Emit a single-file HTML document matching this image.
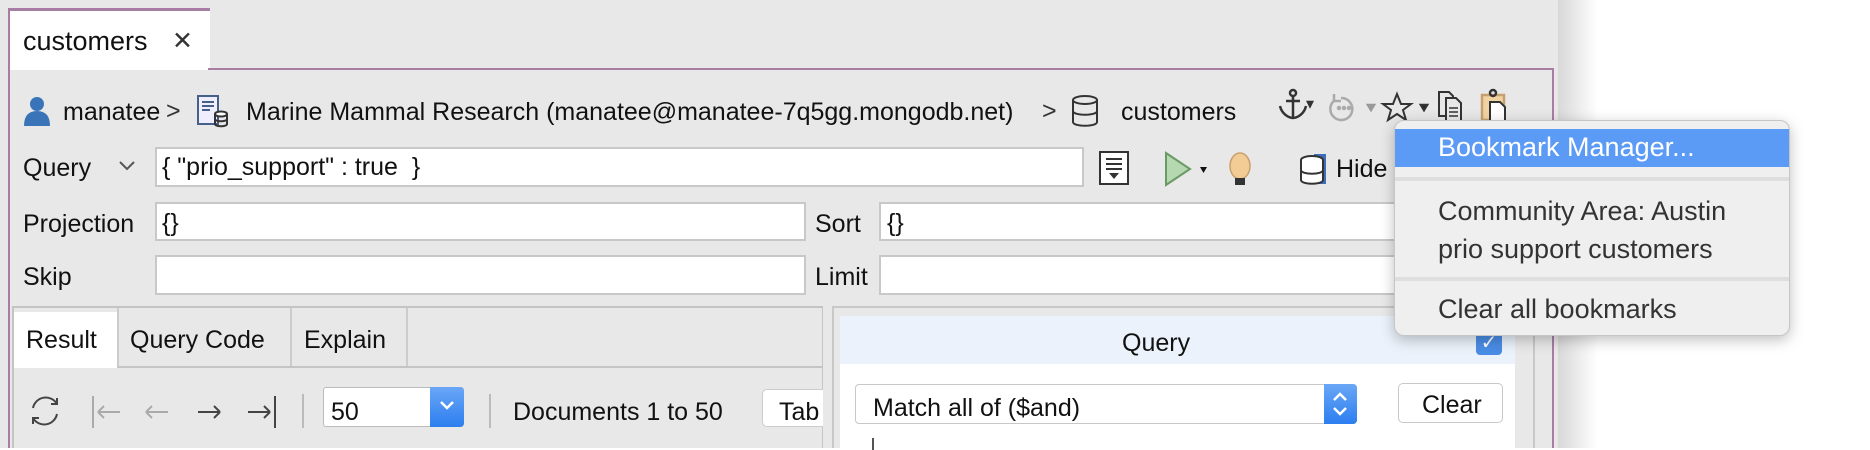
<!DOCTYPE html>
<html><head><meta charset="utf-8"><style>
*{box-sizing:border-box;margin:0;padding:0}
body{width:1870px;height:448px;overflow:hidden;background:#fff;font-family:"Liberation Sans",Arial,sans-serif;color:#111;position:relative}
.a{position:absolute}
.t{position:absolute;font-size:25px;white-space:nowrap;line-height:1}
.inp{position:absolute;background:#fff;border:2px solid #c8c8c8}
</style></head><body>
<div class="a" style="left:0;top:0;width:1558px;height:448px;background:#e8e8e8"></div>
<div class="a" style="left:1558px;top:0;width:40px;height:448px;background:linear-gradient(90deg,#d8d8d8,#fff)"></div>
<!-- tab -->
<div class="a" style="left:8px;top:8px;width:202px;height:62px;background:#fff;border-top:3px solid #a87da3;border-left:2px solid #a87da3"></div>
<div class="t" style="left:23px;top:28px;font-size:27px">customers</div>
<div class="t" style="left:172px;top:29px;font-size:25px;color:#333">✕</div>
<div class="a" style="left:208px;top:68px;width:1346px;height:2px;background:#a87da3"></div>
<div class="a" style="left:8px;top:68px;width:2px;height:380px;background:#a87da3"></div>
<div class="a" style="left:1552px;top:68px;width:2px;height:380px;background:#a87da3"></div>
<!-- breadcrumb -->
<svg class="a" style="left:22px;top:95px" width="32" height="32"><circle cx="15" cy="9" r="7" fill="#3a74b8"/><path d="M2 31 Q2 16 15 16 Q28 16 28 31Z" fill="#3a74b8"/></svg>
<div class="t" style="left:63px;top:100px">manatee</div>
<div class="t" style="left:166px;top:99px;color:#333">&gt;</div>
<svg class="a" style="left:196px;top:94px" width="34" height="34" fill="none" stroke="#46608a" stroke-width="2"><rect x="2" y="2" width="20" height="28" fill="#eef"/><path d="M6 8h12M6 12h12M6 16h8"/><ellipse cx="25" cy="20" rx="6" ry="2.5" fill="#fff" stroke="#333"/><path d="M19 20v10c0 3 12 3 12 0V20M19 25c0 3 12 3 12 0" stroke="#333"/></svg>
<div class="t" style="left:246px;top:100px">Marine Mammal Research (manatee@manatee-7q5gg.mongodb.net)</div>
<div class="t" style="left:1042px;top:99px;color:#333">&gt;</div>
<svg class="a" style="left:1070px;top:94px" width="30" height="34" fill="none" stroke="#333" stroke-width="2"><ellipse cx="15" cy="6" rx="12" ry="4"/><path d="M3 6v22c0 5 24 5 24 0V6M3 17c0 5 24 5 24 0"/></svg>
<div class="t" style="left:1121px;top:100px">customers</div>
<svg class="a" style="left:1276px;top:88px" width="280" height="36" fill="none" stroke="#333" stroke-width="2.5">
<circle cx="17" cy="5" r="3"/><path d="M17 8v22M10 13h14M4 18c2 9 10 12 13 12s11-3 13-12"/><path d="M32 14l4 0-2 4z" fill="#111"/>
<path d="M59 12a11 11 0 1 0 6-2" stroke="#aaa"/><path d="M58 6v7h7" stroke="#aaa"/><circle cx="63" cy="20" r="1" fill="#aaa" stroke="#aaa"/><circle cx="68" cy="20" r="1" fill="#aaa" stroke="#aaa"/><circle cx="73" cy="20" r="1" fill="#aaa" stroke="#aaa"/><path d="M92 17l6 0-3 5z" fill="#999" stroke="#999"/>
<path d="M121 6l4 10 10 0-8 6 3 10-9-6-9 6 3-10-8-6 10 0z" stroke-width="2"/><path d="M145 17l6 0-3 5z" fill="#111"/>
<path d="M163 4h10l4 4v20h-14z" stroke-width="2"/><path d="M170 10h10l5 5v18h-15z" fill="#e8e8e8" stroke-width="2"/><path d="M173 20h9M173 24h9M173 28h9" stroke-width="1.5"/>
<rect x="206" y="7" width="22" height="25" fill="#f0d3a0" stroke="#c8a070"/><circle cx="217" cy="5" r="3"/><path d="M214 14h10l5 5v15h-15z" fill="#fff" stroke-width="2"/>
</svg>
<!-- query row -->
<div class="t" style="left:23px;top:156px">Query</div>
<svg class="a" style="left:118px;top:160px" width="18" height="12"><path d="M2 2l7 7 7-7" fill="none" stroke="#555" stroke-width="2"/></svg>
<div class="inp" style="left:155px;top:147px;width:929px;height:40px"></div>
<div class="t" style="left:162px;top:155px">{ "prio_support" : true&nbsp; }</div>
<svg class="a" style="left:1098px;top:150px" width="34" height="36"><rect x="2" y="2" width="28" height="32" fill="#fff" stroke="#333" stroke-width="2"/><path d="M8 9h16M8 14h16M8 19h16" stroke="#333" stroke-width="2"/><path d="M11 23h10l-5 6z" fill="#333"/></svg>
<svg class="a" style="left:1163px;top:150px" width="100" height="40"><path d="M3 3l24 16-24 16z" fill="#b5d8b0" stroke="#6a9a64" stroke-width="2"/><path d="M37 17h7l-3.5 6z" fill="#111"/><ellipse cx="77" cy="16" rx="10" ry="13" fill="#f2cc94" stroke="#c8a070" stroke-width="1.5"/><rect x="72" y="28" width="10" height="7" fill="#333"/></svg>
<svg class="a" style="left:1298px;top:152px" width="34" height="36" fill="#fff" stroke="#333" stroke-width="2"><rect x="16" y="2" width="12" height="30" fill="#3c6fb5" stroke="none"/><ellipse cx="14" cy="8" rx="11" ry="4"/><path d="M3 8v20c0 5 22 5 22 0V8M3 18c0 5 22 5 22 0"/></svg>
<div class="t" style="left:1336px;top:157px">Hide Q</div>
<!-- projection/sort -->
<div class="t" style="left:23px;top:212px">Projection</div>
<div class="inp" style="left:155px;top:202px;width:651px;height:39px"></div>
<div class="t" style="left:162px;top:211px">{}</div>
<div class="t" style="left:815px;top:212px">Sort</div>
<div class="inp" style="left:879px;top:202px;width:670px;height:39px"></div>
<div class="t" style="left:887px;top:211px">{}</div>
<div class="t" style="left:23px;top:265px">Skip</div>
<div class="inp" style="left:155px;top:255px;width:651px;height:40px"></div>
<div class="t" style="left:815px;top:265px">Limit</div>
<div class="inp" style="left:879px;top:255px;width:670px;height:40px"></div>
<!-- left panel -->
<div class="a" style="left:12px;top:306px;width:812px;height:142px;border:2px solid #c4c4c4;border-bottom:none;background:#e8e8e8"></div>
<div class="a" style="left:14px;top:312px;width:104px;height:56px;background:#fff"></div>
<div class="a" style="left:117px;top:308px;width:2px;height:60px;background:#ccc"></div>
<div class="a" style="left:290px;top:308px;width:2px;height:60px;background:#ccc"></div>
<div class="a" style="left:406px;top:308px;width:2px;height:60px;background:#ccc"></div>
<div class="a" style="left:117px;top:366px;width:706px;height:2px;background:#c4c4c4"></div>
<div class="t" style="left:26px;top:328px">Result</div>
<div class="t" style="left:130px;top:328px">Query Code</div>
<div class="t" style="left:304px;top:328px">Explain</div>
<svg class="a" style="left:28px;top:394px" width="260" height="36" fill="none" stroke="#444" stroke-width="2">
<path d="M5 14a13 13 0 0 1 24-4M29 20a13 13 0 0 1-24 4"/><path d="M29 4v6h-6M5 30v-6h6"/>
<path d="M65 2v32M70 18h22M70 18l6-6M70 18l6 6" stroke="#aaa"/>
<path d="M118 18h22M118 18l6-6M118 18l6 6" stroke="#aaa"/>
<path d="M170 18h22M192 18l-6-6M192 18l-6 6"/>
<path d="M220 18h22M242 18l-6-6M242 18l-6 6M247 2v32"/>
</svg>
<div class="a" style="left:302px;top:394px;width:2px;height:34px;background:#bbb"></div>
<div class="a" style="left:323px;top:387px;width:141px;height:40px;background:#fff;border:1px solid #bbb;border-radius:3px"></div>
<div class="a" style="left:430px;top:387px;width:34px;height:40px;background:linear-gradient(#6aa7f6,#2c7ef0);border-radius:0 4px 4px 0"></div>
<svg class="a" style="left:438px;top:400px" width="18" height="12"><path d="M3 2l6 6 6-6" fill="none" stroke="#fff" stroke-width="2.5"/></svg>
<div class="t" style="left:331px;top:400px">50</div>
<div class="a" style="left:489px;top:394px;width:2px;height:34px;background:#bbb"></div>
<div class="t" style="left:513px;top:400px">Documents 1 to 50</div>
<div class="a" style="left:762px;top:389px;width:70px;height:38px;background:#fff;border:1px solid #ccc;border-radius:5px"></div>
<div class="t" style="left:779px;top:400px">Tab</div>
<div class="a" style="left:823px;top:306px;width:9px;height:142px;background:#e8e8e8"></div>
<!-- right panel -->
<div class="a" style="left:832px;top:306px;width:703px;height:142px;border:2px solid #c8c8c8;border-bottom:none;background:#e8e8e8"></div>
<div class="a" style="left:840px;top:316px;width:675px;height:132px;background:#fff"></div>
<div class="a" style="left:840px;top:316px;width:675px;height:48px;background:#ebf2fb"></div>
<div class="t" style="left:1122px;top:331px">Query</div>
<div class="a" style="left:1476px;top:331px;width:26px;height:24px;background:#4a8de6;border-radius:4px;color:#fff;font-size:20px;text-align:center;line-height:24px">✓</div>
<div class="a" style="left:855px;top:384px;width:502px;height:40px;background:#fff;border:1px solid #c8c8c8;border-radius:4px"></div>
<div class="a" style="left:1324px;top:384px;width:33px;height:40px;background:linear-gradient(#6aa7f6,#2c7ef0);border-radius:0 4px 4px 0"></div>
<svg class="a" style="left:1330px;top:390px" width="20" height="28" fill="none" stroke="#fff" stroke-width="2.5"><path d="M4 10l6-6 6 6M4 18l6 6 6-6"/></svg>
<div class="t" style="left:873px;top:396px">Match all of ($and)</div>
<div class="a" style="left:1398px;top:383px;width:105px;height:40px;background:#fff;border:1px solid #c8c8c8;border-radius:5px"></div>
<div class="t" style="left:1422px;top:393px">Clear</div>
<div class="a" style="left:872px;top:438px;width:2px;height:12px;background:#555"></div>
<!-- menu -->
<div class="a" style="left:1394px;top:120px;width:396px;height:216px;background:#efefef;border:1px solid #c6c6c6;border-radius:10px;box-shadow:0 4px 14px rgba(0,0,0,.25);overflow:hidden">
<div class="a" style="left:0;top:8px;width:396px;height:38px;background:#5b9af5"></div>
<div class="a" style="left:0;top:56px;width:396px;height:4px;background:#dedede"></div>
<div class="a" style="left:0;top:156px;width:396px;height:4px;background:#dedede"></div>
<div class="t" style="left:43px;top:13px;font-size:27px;color:#fff">Bookmark Manager...</div>
<div class="t" style="left:43px;top:77px;font-size:27px;color:#333">Community Area: Austin</div>
<div class="t" style="left:43px;top:115px;font-size:27px;color:#333">prio support customers</div>
<div class="t" style="left:43px;top:175px;font-size:27px;color:#333">Clear all bookmarks</div>
</div>
</body></html>
